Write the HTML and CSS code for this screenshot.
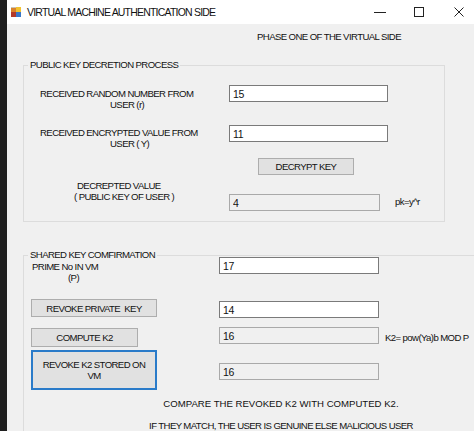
FILE: index.html
```html
<!DOCTYPE html>
<html lang="en">
<head>
<meta charset="UTF-8" />
<meta name="viewport" content="width=device-width, initial-scale=1" />
<title>Virtual Machine Authentication Side</title>
<link rel="stylesheet" href="styles.css">
</head>
<body>
<div class="frame">
  <div class="edge"></div>
  <div class="window">
    <header class="titlebar">
      <svg class="app-icon" width="10" height="10" viewBox="0 0 10 10">
        <rect x="0" y="0" width="10" height="10" fill="#c9c3b8"/>
        <rect x="0" y="1" width="5" height="4" fill="#d9822b"/>
        <rect x="5" y="0" width="5" height="5" fill="#f2c230"/>
        <rect x="0" y="5" width="5" height="5" fill="#b33a2a"/>
        <rect x="5" y="5" width="5" height="5" fill="#3a78c8"/>
      </svg>
      <span class="title">VIRTUAL MACHINE AUTHENTICATION SIDE</span>
      <div class="controls">
        <svg class="ctl ctl-min" width="12" height="12" viewBox="0 0 12 12"><path d="M0 6.5H12" stroke="#222" stroke-width="1"/></svg>
        <svg class="ctl ctl-max" width="10" height="10" viewBox="0 0 10 10"><rect x="0.5" y="0.5" width="9" height="9" fill="none" stroke="#222" stroke-width="1"/></svg>
        <svg class="ctl ctl-close" width="10" height="10" viewBox="0 0 10 10"><path d="M0.5 0.5L9.5 9.5M9.5 0.5L0.5 9.5" stroke="#222" stroke-width="1"/></svg>
      </div>
    </header>

    <main class="client">
      <p class="phase">PHASE ONE OF THE VIRTUAL SIDE</p>

      <fieldset class="group group-public">
        <legend>PUBLIC KEY DECRETION PROCESS</legend>

        <div class="row row-random">
          <label class="caption">RECEIVED RANDOM NUMBER FROM<span class="sub">USER (r)</span></label>
          <input class="field" type="text" value="15">
        </div>

        <div class="row row-encrypted">
          <label class="caption">RECEIVED ENCRYPTED VALUE FROM<span class="sub">USER ( Y)</span></label>
          <input class="field" type="text" value="11">
        </div>

        <div class="row row-decrypt">
          <button class="btn btn-decrypt">DECRYPT KEY</button>
        </div>

        <div class="row row-public">
          <label class="caption caption-public">DECREPTED VALUE<span class="sub">( PUBLIC KEY OF USER )</span></label>
          <input class="field field-short readonly" type="text" value="4" readonly>
          <span class="formula formula-pk">pk=y^r</span>
        </div>
      </fieldset>

      <fieldset class="group group-shared">
        <legend>SHARED KEY COMFIRMATION</legend>

        <div class="row row-prime">
          <label class="caption caption-prime">PRIME No IN VM<span class="sub">(P)</span></label>
          <input class="field field-wide" type="text" value="17">
        </div>

        <div class="row row-private">
          <button class="btn btn-private">REVOKE PRIVATE&nbsp; KEY</button>
          <input class="field field-wide" type="text" value="14">
        </div>

        <div class="row row-compute">
          <button class="btn btn-compute">COMPUTE K2</button>
          <input class="field field-wide readonly" type="text" value="16" readonly>
          <span class="formula formula-k2">K2= pow(Ya)b MOD P</span>
        </div>

        <div class="row row-stored">
          <button class="btn btn-stored">REVOKE K2 STORED ON<br>VM</button>
          <input class="field field-wide readonly" type="text" value="16" readonly>
        </div>

        <div class="notes">
          <p class="note note-compare">COMPARE THE REVOKED K2 WITH COMPUTED K2.</p>
          <p class="note">IF THEY MATCH, THE USER IS GENUINE ELSE MALICIOUS USER</p>
        </div>
      </fieldset>
    </main>
  </div>
</div>
</body>
</html>
```

FILE: styles.css
```css
html, body {
  margin: 0;
  height: 100%;
  overflow: hidden;
}
body {
  background-color: #1f1f1f;
  font-family: 'Liberation Sans', Arial, sans-serif;
  font-size: 9.6px;
  letter-spacing: -0.6px;
  color: #111;
}
.frame {
  display: flex;
  height: 431px;
}
.edge {
  width: 7px;
  flex: none;
  background-color: #1f1f1f;
}
.window {
  flex: 1;
  display: flex;
  flex-direction: column;
  overflow: hidden;
}

/* title bar */
.titlebar {
  height: 24px;
  flex: none;
  background-color: #fff;
  display: flex;
  align-items: center;
}
.app-icon {
  margin-left: 4px;
}
.title {
  margin-left: 6px;
  font-size: 10.5px;
  letter-spacing: -0.8px;
  color: #111;
}
.controls {
  margin-left: auto;
  display: flex;
  align-items: center;
}
.ctl-min { margin-right: 28px; }
.ctl-max { margin-right: 30px; }
.ctl-close { margin-right: 10px; }

/* form area */
.client {
  flex: 1;
  background-color: #f0f0f0;
  overflow: hidden;
}
.phase {
  margin: 7px 0 0 250px;
  line-height: 12px;
}
.group {
  margin: 16px 0 0 16px;
  padding: 0;
  border: 1px solid #dcdcdc;
  min-width: 0;
}
.group legend {
  margin-left: 4px;
  padding: 0 2px;
  line-height: 12px;
}
.group-public {
  width: 420px;
}
.group-shared {
  width: 480px;
  margin-top: 27px;
  border-bottom: none;
}

.row {
  display: flex;
  align-items: flex-start;
}
.caption {
  line-height: 11px;
  white-space: nowrap;
  box-sizing: border-box;
}
.caption .sub {
  display: block;
}
.field {
  font-family: inherit;
  font-size: 10.5px;
  letter-spacing: -0.4px;
  color: #111;
  width: 159px;
  height: 17px;
  box-sizing: border-box;
  border: 1px solid #7a7a7a;
  background-color: #fff;
  padding: 0 3px;
  margin: 0;
  outline: none;
}
.field.readonly {
  background-color: #f0f0f0;
  border-color: #a9a9a9;
}
.field-short { width: 151px; }
.field-wide { width: 160px; }

.btn {
  font-family: inherit;
  font-size: 9.6px;
  letter-spacing: -0.6px;
  line-height: 11px;
  background-color: #e1e1e1;
  border: 1px solid #adadad;
  padding: 0;
  margin: 0;
  color: #111;
}
.formula {
  line-height: 11px;
  white-space: nowrap;
}

/* public key group rows */
.row-random { height: 48px; }
.row-random .caption { margin: 17px 0 0 16px; width: 189px; }
.row-random .sub { padding-left: 70px; }
.row-random .field { margin-top: 14px; }

.row-encrypted { height: 39px; }
.row-encrypted .caption { margin: 8px 0 0 16px; width: 189px; }
.row-encrypted .sub { padding-left: 70px; }
.row-encrypted .field { margin-top: 6px; }

.row-decrypt { height: 20px; }
.btn-decrypt { width: 96px; height: 17px; margin-left: 234px; }

.row-public { height: 43px; }
.caption-public { margin: 2px 0 0 50px; width: 155px; padding-left: 3px; }
.caption-public .sub { margin-left: -3px; }
.row-public .field { margin-top: 16px; }
.formula-pk { margin: 18px 0 0 15px; }

/* shared key group rows */
.row-prime { height: 38px; }
.caption-prime { margin: 1px 0 0 8px; width: 187px; line-height: 10.5px; }
.caption-prime .sub { padding-left: 36px; }
.row-prime .field { margin-top: -4px; }

.row-private { height: 28px; }
.btn-private { width: 126px; height: 18px; margin-left: 7px; }
.row-private .field { margin: 2px 0 0 62px; }

.row-compute { height: 23px; }
.btn-compute { width: 107px; height: 19px; margin: 1px 0 0 7px; }
.row-compute .field { margin-left: 81px; }
.formula-k2 { margin: 5px 0 0 6px; }

.row-stored { height: 40px; }
.btn-stored { width: 126px; height: 40px; margin-left: 7px; border: 2px solid #2a7bc9; }
.row-stored .field { margin: 13px 0 0 62px; }

.notes {
  width: 514px;
  text-align: center;
}
.note {
  margin: 8px 0 0;
  line-height: 11px;
  white-space: nowrap;
}
.note-compare { letter-spacing: 0; }
.note + .note { margin-top: 11px; }
```
